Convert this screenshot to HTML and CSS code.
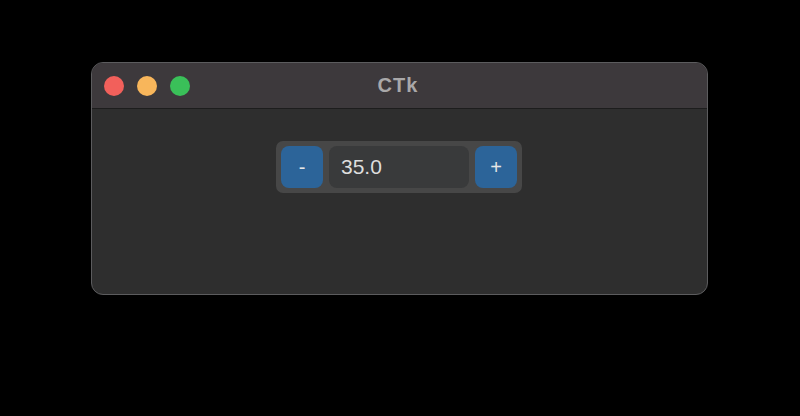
FILE: index.html
```html
<!DOCTYPE html>
<html lang="en">
<head>
<meta charset="utf-8">
<title>CTk</title>
<link rel="stylesheet" href="styles.css">
</head>
<body>
  <div class="window">
    <div class="titlebar">
      <div class="lights">
        <span class="light close"></span>
        <span class="light minimize"></span>
        <span class="light zoom"></span>
      </div>
      <div class="title">CTk</div>
    </div>
    <div class="content">
      <div class="spinbox">
        <button class="step">-</button>
        <div class="entry">35.0</div>
        <button class="step">+</button>
      </div>
    </div>
  </div>
</body>
</html>
```
FILE: styles.css
```css
html, body {
  margin: 0;
  height: 100%;
  background: #000;
}

body {
  padding: 62px 0 0 91px;
  box-sizing: border-box;
  font-family: "Liberation Sans", Arial, sans-serif;
}

.window {
  width: 617px;
  height: 233px;
  box-sizing: border-box;
  border: 1px solid #5c5c5e;
  border-radius: 12px;
  background: #2e2e2e;
  overflow: hidden;
  display: flex;
  flex-direction: column;
}

.titlebar {
  height: 45px;
  flex: none;
  background: #3d393c;
  border-bottom: 1px solid #1d1d1d;
  display: flex;
  align-items: center;
  position: relative;
}

.lights {
  display: flex;
  gap: 13px;
  padding-left: 12px;
}

.light {
  width: 20px;
  height: 20px;
  border-radius: 50%;
  display: block;
}

.light.close { background: #f2605b; }
.light.minimize { background: #f8b65b; }
.light.zoom { background: #3ac059; }

.title {
  position: absolute;
  left: 0;
  right: 0;
  top: 0;
  bottom: 0;
  display: flex;
  align-items: center;
  justify-content: center;
  color: #a9a8a9;
  font-weight: bold;
  font-size: 20px;
  letter-spacing: 1px;
  padding-right: 3px;
}

.content {
  flex: 1;
  display: flex;
  justify-content: center;
  align-items: flex-start;
  padding-top: 32px;
  padding-right: 1px;
}

.spinbox {
  display: flex;
  gap: 6px;
  padding: 5px;
  background: #474747;
  border-radius: 7px;
}

.step {
  width: 42px;
  height: 42px;
  border: none;
  border-radius: 8px;
  background: #2c6499;
  color: #e6e6e6;
  font-family: "Liberation Sans", Arial, sans-serif;
  font-size: 20px;
  padding: 0;
  display: flex;
  align-items: center;
  justify-content: center;
}

.entry {
  width: 140px;
  height: 42px;
  box-sizing: border-box;
  border-radius: 8px;
  background: #393a3b;
  color: #dedede;
  font-size: 21px;
  display: flex;
  align-items: center;
  padding-left: 12px;
}
```
